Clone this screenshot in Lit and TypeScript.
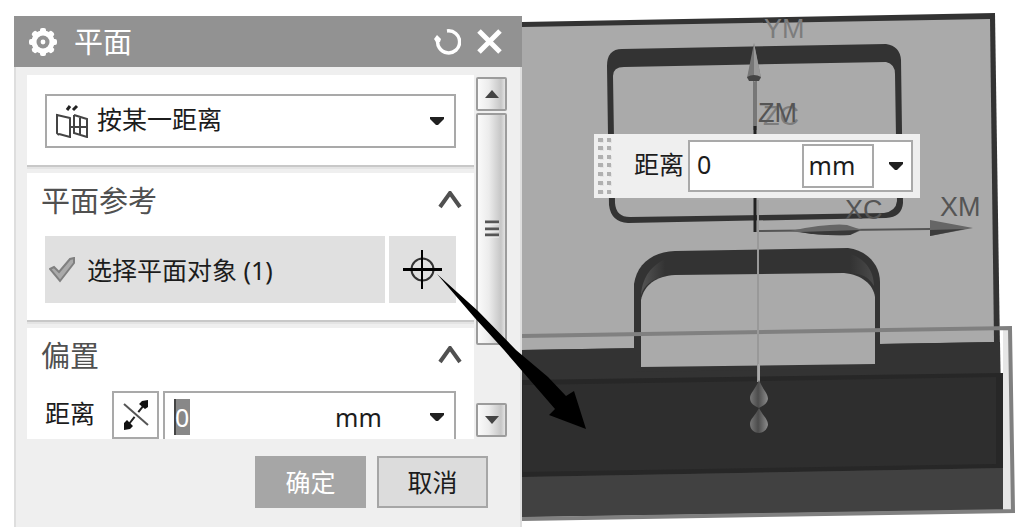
import { LitElement, html, css, svg } from "lit";
import { customElement, property } from "lit/decorators.js";

const caret = html`<svg class="caret" width="14" height="8" viewBox="0 0 14 8" aria-hidden="true">
  <path d="M0 0H14V2L8 8H6L0 2Z" fill="#202020" />
</svg>`;

const shared = css`
  :host {
    display: block;
    box-sizing: border-box;
    font-family: "Noto Sans", "Noto Sans CJK SC", sans-serif;
    font-size: 25px;
    line-height: 36px;
    color: #1c1c1c;
  }
  * {
    box-sizing: border-box;
  }
  button,
  input,
  select {
    font: inherit;
    color: inherit;
    margin: 0;
    padding: 0;
    border: 0;
    border-radius: 0;
    background: none;
    appearance: none;
    outline: none;
    min-width: 0;
  }
  svg {
    display: block;
    flex: none;
  }
  .caret {
    pointer-events: none;
  }
`;

@customElement("panel-section")
class PanelSection extends LitElement {
  @property() heading = "";
  static styles = [
    shared,
    css`
      :host {
        background: #fff;
        border-bottom: 2px solid #c8c8c8;
        box-shadow: 0 2px #e4e4e4;
      }
      header {
        display: flex;
        align-items: center;
        justify-content: space-between;
        padding: 6px 12px 0 14px;
      }
      h2 {
        margin: 0;
        font-size: 29px;
        font-weight: 400;
        line-height: 44px;
        color: #505050;
      }
    `,
  ];
  render() {
    return html`${this.heading
        ? html`<header>
            <h2>${this.heading}</h2>
            <button aria-label="折叠">
              <svg width="24" height="20" viewBox="0 0 24 20">
                <path d="M2 16L12 2L22 16" fill="none" stroke="#505050" stroke-width="4" />
              </svg>
            </button>
          </header>`
        : ""}<slot></slot>`;
  }
}

@customElement("plane-dialog")
class PlaneDialog extends LitElement {
  static styles = [
    shared,
    css`
      :host {
        background: #efefef;
      }
      .title {
        display: flex;
        align-items: center;
        gap: 16px;
        height: 51px;
        padding: 0 20px 0 14px;
        background: #929292;
        color: #fff;
      }
      h1 {
        flex: 1;
        margin: 0;
        font-size: 29px;
        font-weight: 400;
        line-height: 44px;
      }
      .body {
        border: solid #dedede;
        border-width: 0 2px;
        padding: 8px 13px 19px 11px;
      }
      .viewport {
        display: flex;
        gap: 2px;
        height: 364px;
        overflow: hidden;
      }
      .sections {
        flex: 1;
        display: flex;
        flex-direction: column;
        gap: 6px;
      }
      .sections > * {
        flex: none;
      }
      .combo {
        display: flex;
        align-items: center;
        border: 2px solid #a9a9a9;
        background: #fff;
        padding-right: 10px;
      }
      .combo select {
        flex: 1;
        height: 50px;
        padding-bottom: 4px;
      }
      .type {
        margin: 19px 18px 17px;
        padding-left: 9px;
        gap: 9px;
      }
      .pick {
        display: flex;
        gap: 4px;
        padding: 13px 18px 17px;
        margin: 0;
      }
      .pick button {
        height: 67px;
        background: #e0e0e0;
        display: flex;
        align-items: center;
      }
      .object {
        flex: 1;
        padding-left: 4px;
        gap: 12px;
      }
      .target {
        width: 67px;
        justify-content: center;
      }
      .offset {
        display: flex;
        align-items: flex-start;
        padding: 13px 18px 18px;
      }
      .offset label {
        width: 67px;
        line-height: 44px;
      }
      .reverse {
        width: 47px;
        height: 48px;
        border: 2px solid #a9a9a9;
        margin-right: 4px;
        display: grid;
        place-items: center;
      }
      .offset .combo {
        flex: 1;
        padding-left: 9px;
        height: 52px;
      }
      .combo input {
        flex: 1;
        width: 0;
        height: 36px;
        padding-left: 1px;
        color: #fff;
        background: linear-gradient(90deg, #444 0 2px, #888 2px) no-repeat 0 0 / 16px 36px;
      }
      .combo select.unit {
        flex: 0 0 95px;
        padding-bottom: 0;
      }
      .scroll {
        width: 31px;
        padding: 2px 0;
        display: flex;
        flex-direction: column;
      }
      .scroll button,
      .thumb {
        border: 2px solid #9c9c9c;
        border-radius: 2px;
        background: linear-gradient(90deg, #fafafa, #ececec 40%, #c6c6c6 85%, #e2e2e2);
        display: grid;
        place-items: center;
      }
      .scroll button {
        height: 34px;
      }
      .thumb {
        height: 232px;
        margin: 2px 0 58px;
      }
      .actions {
        display: flex;
        justify-content: flex-end;
        gap: 11px;
        padding: 17px 19px 0 0;
      }
      .actions button {
        width: 111px;
        height: 52px;
        border: 2px solid #a6a6a6;
        background: #dcdcdc;
      }
      .actions .ok {
        background: #a6a6a6;
        color: #fff;
      }
    `,
  ];
  render() {
    return html`
      <div class="title">
        <svg width="30" height="30" viewBox="-15 -15 30 30" aria-hidden="true">
          <g fill="#fff">
            ${[0, 45, 90, 135].map(
              (a) => svg`<rect x="-3" y="-14" width="6" height="28" rx="2" transform="rotate(${a})"/>`
            )}
            <circle r="11.5" />
          </g>
          <circle r="6.5" fill="#929292" />
          <circle r="2.4" fill="#fff" />
        </svg>
        <h1>平面</h1>
        <button aria-label="重置">
          <svg width="28" height="28" viewBox="0 0 28 28">
            <path d="M14 3A11 11 0 1 1 5 11" fill="none" stroke="#fff" stroke-width="3.5" />
            <path d="M1 11L4 7L8 11L7 14H3Z" fill="#fff" />
          </svg>
        </button>
        <button aria-label="关闭">
          <svg width="25" height="25" viewBox="0 0 25 25">
            <path d="M2 2L23 23M23 2L2 23" stroke="#fff" stroke-width="5" />
          </svg>
        </button>
      </div>
      <div class="body">
        <div class="viewport">
          <div class="sections">
            <panel-section>
              <div class="combo type">
                <svg width="32" height="34" viewBox="0 0 32 34" fill="none" stroke="#444" stroke-width="2" aria-hidden="true">
                  <path d="M14 14L1 11V29L3 31M1 11L14 14V33L3 30M18 11L31 15V33L18 29V11M13 23H31M24 13V31" />
                  <path d="M11 6L14 2M17 6L21 2" stroke="#222" stroke-width="3" />
                </svg>
                <select aria-label="类型"><option>按某一距离</option></select>
                ${caret}
              </div>
            </panel-section>
            <panel-section heading="平面参考">
              <div class="pick">
                <button class="object">
                  <svg width="26" height="26" viewBox="0 0 26 26">
                    <path d="M1 12L5 10L10 15L21 2L25 1V6L11 24Z" fill="#aaa" stroke="#808080" stroke-width="2" />
                  </svg>
                  选择平面对象 (1)
                </button>
                <button class="target" aria-label="选择">
                  <svg width="39" height="39" viewBox="0 0 39 39" fill="none">
                    <circle cx="19.5" cy="19.5" r="11" stroke="#333" stroke-width="2" />
                    <path d="M19 0V39" stroke="#000" stroke-width="2" />
                    <path d="M0 19.5H39" stroke="#000" stroke-width="3" />
                  </svg>
                </button>
              </div>
            </panel-section>
            <panel-section heading="偏置">
              <div class="offset">
                <label for="distance">距离</label>
                <button class="reverse" aria-label="反向">
                  <svg width="28" height="34" viewBox="0 0 28 34">
                    <path d="M2 6L26 27" stroke="#555" stroke-width="2" />
                    <path d="M7 26L22 7" stroke="#222" stroke-width="2" stroke-dasharray="9 6" />
                    <path d="M26 2V9L23 11L17 6L20 3ZM2 32V25L5 22L11 28L8 31Z" fill="#111" />
                  </svg>
                </button>
                <div class="combo">
                  <input id="distance" value="0" />
                  <select class="unit" aria-label="单位"><option>mm</option></select>
                  ${caret}
                </div>
              </div>
            </panel-section>
          </div>
          <div class="scroll">
            <button aria-label="向上">
              <svg width="14" height="8" viewBox="0 0 14 8"><path d="M0 8L7 0L14 8Z" fill="#444" /></svg>
            </button>
            <div class="thumb">
              <svg width="14" height="18" viewBox="0 0 14 18">
                <path d="M0 2H14M0 9H14M0 15H14" stroke="#555" stroke-width="3" />
                <path d="M0 4H14M0 11H14M0 17H14" stroke="#f4f4f4" stroke-width="1" />
              </svg>
            </div>
            <button aria-label="向下">
              <svg width="14" height="8" viewBox="0 0 14 8"><path d="M0 0L7 8L14 0Z" fill="#444" /></svg>
            </button>
          </div>
        </div>
        <div class="actions">
          <button class="ok">确定</button>
          <button>取消</button>
        </div>
      </div>
    `;
  }
}

@customElement("distance-popup")
class DistancePopup extends LitElement {
  static styles = [
    shared,
    css`
      :host {
        display: flex;
        align-items: center;
        width: 326px;
        padding: 4px 7px 4px 4px;
        background: #efefef;
      }
      label {
        width: 54px;
        margin-left: 22px;
        padding-bottom: 4px;
      }
      .field {
        flex: 1;
        height: 52px;
        display: flex;
        align-items: center;
        border: 2px solid #a9a9a9;
        background: #fff;
        padding-right: 8px;
      }
      input {
        flex: 1;
        width: 0;
        height: 48px;
        padding: 0 0 4px 7px;
      }
      .unit {
        width: 72px;
        height: 44px;
        border: 2px solid #a9a9a9;
        padding: 0 12px 2px 0;
      }
      .more {
        margin-left: 15px;
      }
    `,
  ];
  render() {
    const rows = [0, 8, 17, 25, 34, 43, 52];
    return html`
      <svg width="14" height="56" viewBox="0 0 14 56" aria-hidden="true">
        ${rows.map(
          (y) => svg`<path d="M2 ${y + 1}h4v4h-4zM11 ${y + 1}h4v4h-4z" fill="#e4e4e4"/><path d="M0 ${y}h5v4h-5zM9 ${y}h4v4h-4z" fill="#b0b0b0"/>`
        )}
      </svg>
      <label for="value">距离</label>
      <div class="field">
        <input id="value" value="0" />
        <button class="unit">mm</button>
        <button class="more" aria-label="更多">${caret}</button>
      </div>
    `;
  }
}

@customElement("model-scene")
class ModelScene extends LitElement {
  static styles = css`
    :host {
      display: block;
    }
    svg {
      display: block;
      width: 100%;
      height: auto;
    }
    .axis {
      font: 27px "Liberation Sans", sans-serif;
      fill: #555;
    }
    .faint {
      fill: #7c7c7c;
    }
  `;
  render() {
    return html`<svg viewBox="522 0 498 531" role="img" aria-label="模型">
      <defs>
        <linearGradient id="drop">
          <stop offset="0" stop-color="#777" />
          <stop offset=".45" stop-color="#4c4c4c" />
          <stop offset="1" stop-color="#8c8c8c" />
        </linearGradient>
        <linearGradient id="bendL">
          <stop offset="0" stop-color="#555" />
          <stop offset="1" stop-color="#333" />
        </linearGradient>
        <linearGradient id="bendR">
          <stop offset="0" stop-color="#333" />
          <stop offset="1" stop-color="#4a4a4a" />
        </linearGradient>
      </defs>
      <path d="M522 22L995 13L1000 350H522Z" fill="#333" />
      <path d="M522 27L990 19L994 342L522 350Z" fill="#aaa" />
      <text class="axis faint" x="764" y="38">YM</text>
      <path d="M607 66Q607 49 622 49L886 44Q900 46 901 60L903 203Q902 217 886 218L628 223Q611 222 609 205Z" fill="#333" />
      <path d="M613 76Q613 67 624 67L886 62Q895 64 895 74L897 201Q896 211 884 213L630 217Q616 217 615 203Z" fill="#aaa" />
      <path d="M522 350L1000 342L1003 509L522 517Z" fill="#333" />
      <path d="M522 380L1003 373V468L522 477Z" fill="#272727" />
      <path d="M523 385L996 377V464L523 472Z" fill="#2e2e2e" />
      <path d="M522 477L1003 468V510L522 517Z" fill="#414141" />
      <path d="M634 372V284C637 264 652 252 675 251L848 248C866 250 880 264 880 282V368Z" fill="#333" />
      <path d="M641 295C643 275 652 266 665 259V276C652 279 644 285 641 295Z" fill="url(#bendL)" />
      <path d="M850 254C864 258 874 270 874 286C868 276 862 274 850 273Z" fill="url(#bendR)" />
      <path d="M641 300C644 285 656 276 675 275L844 273C862 275 873 284 875 297V364L641 367Z" fill="#aaa" />
      <path d="M1003 329H1010L1013 511H1003Z" fill="#e6e6e6" />
      <path d="M522 336L1010 328L1013 511L522 519" fill="none" stroke="#808080" stroke-width="4" />
      <path d="M755 80V130" stroke="#777" stroke-width="4" />
      <path d="M755 126V232" stroke="#222" stroke-width="3" />
      <path d="M754 43L747 78Q754 83 761 78Z" fill="#777" />
      <path d="M754 43V82L761 78Z" fill="#999" />
      <path d="M747 77Q754 73 761 77L759 81H749Z" fill="#444" />
      <path d="M758 200V382" stroke="#999" stroke-width="2" />
      <text class="axis faint" x="763" y="125">ZC</text>
      <text class="axis" x="758" y="122">ZM</text>
      <text class="axis" x="845" y="219">XC</text>
      <text class="axis" x="940" y="216">XM</text>
      <path d="M759 231L930 229" stroke="#555" stroke-width="2" />
      <path d="M790 231Q830 223 847 225L862 230L850 235Q820 236 790 231Z" fill="#666" />
      <path d="M800 232L860 230L850 235Q820 236 800 232Z" fill="#383838" />
      <path d="M930 220L973 228L930 236Z" fill="#666" />
      <path d="M930 230L965 229L930 236Z" fill="#3c3c3c" />
      <path d="M759 364V382" stroke="#aaa" stroke-width="2" />
      <path d="M759 380C763 390 768 393 768 399C767 404 763 406 759 408C755 406 750 404 750 398C750 393 755 390 759 380Z" fill="url(#drop)" />
      <path d="M759 408C763 416 768 419 768 425C767 430 763 433 759 433C755 433 750 430 750 424C750 419 755 416 759 408Z" fill="url(#drop)" />
    </svg>`;
  }
}

@customElement("app-root")
class AppRoot extends LitElement {
  static styles = css`
    :host {
      display: block;
      background: #fff;
    }
    .workspace {
      position: relative;
      display: flex;
      align-items: flex-start;
      padding-left: 14px;
    }
    plane-dialog {
      flex: 0 0 508px;
      margin-top: 16px;
    }
    .stage {
      position: relative;
      flex: 1;
      min-width: 400px;
    }
    distance-popup {
      position: absolute;
      left: 72px;
      top: 134px;
    }
    .pointer {
      position: absolute;
      left: 436px;
      top: 274px;
      pointer-events: none;
    }
  `;
  render() {
    return html`<main class="workspace">
      <plane-dialog></plane-dialog>
      <div class="stage">
        <model-scene></model-scene>
        <distance-popup></distance-popup>
      </div>
      <svg class="pointer" width="152" height="157" viewBox="436 274 152 157" aria-hidden="true">
        <path d="M437 274L478 311L516 350L548 377L566 396L574 391L586 429L549 415L555 409L504 350L474 317Z" fill="#000" />
      </svg>
    </main>`;
  }
}
